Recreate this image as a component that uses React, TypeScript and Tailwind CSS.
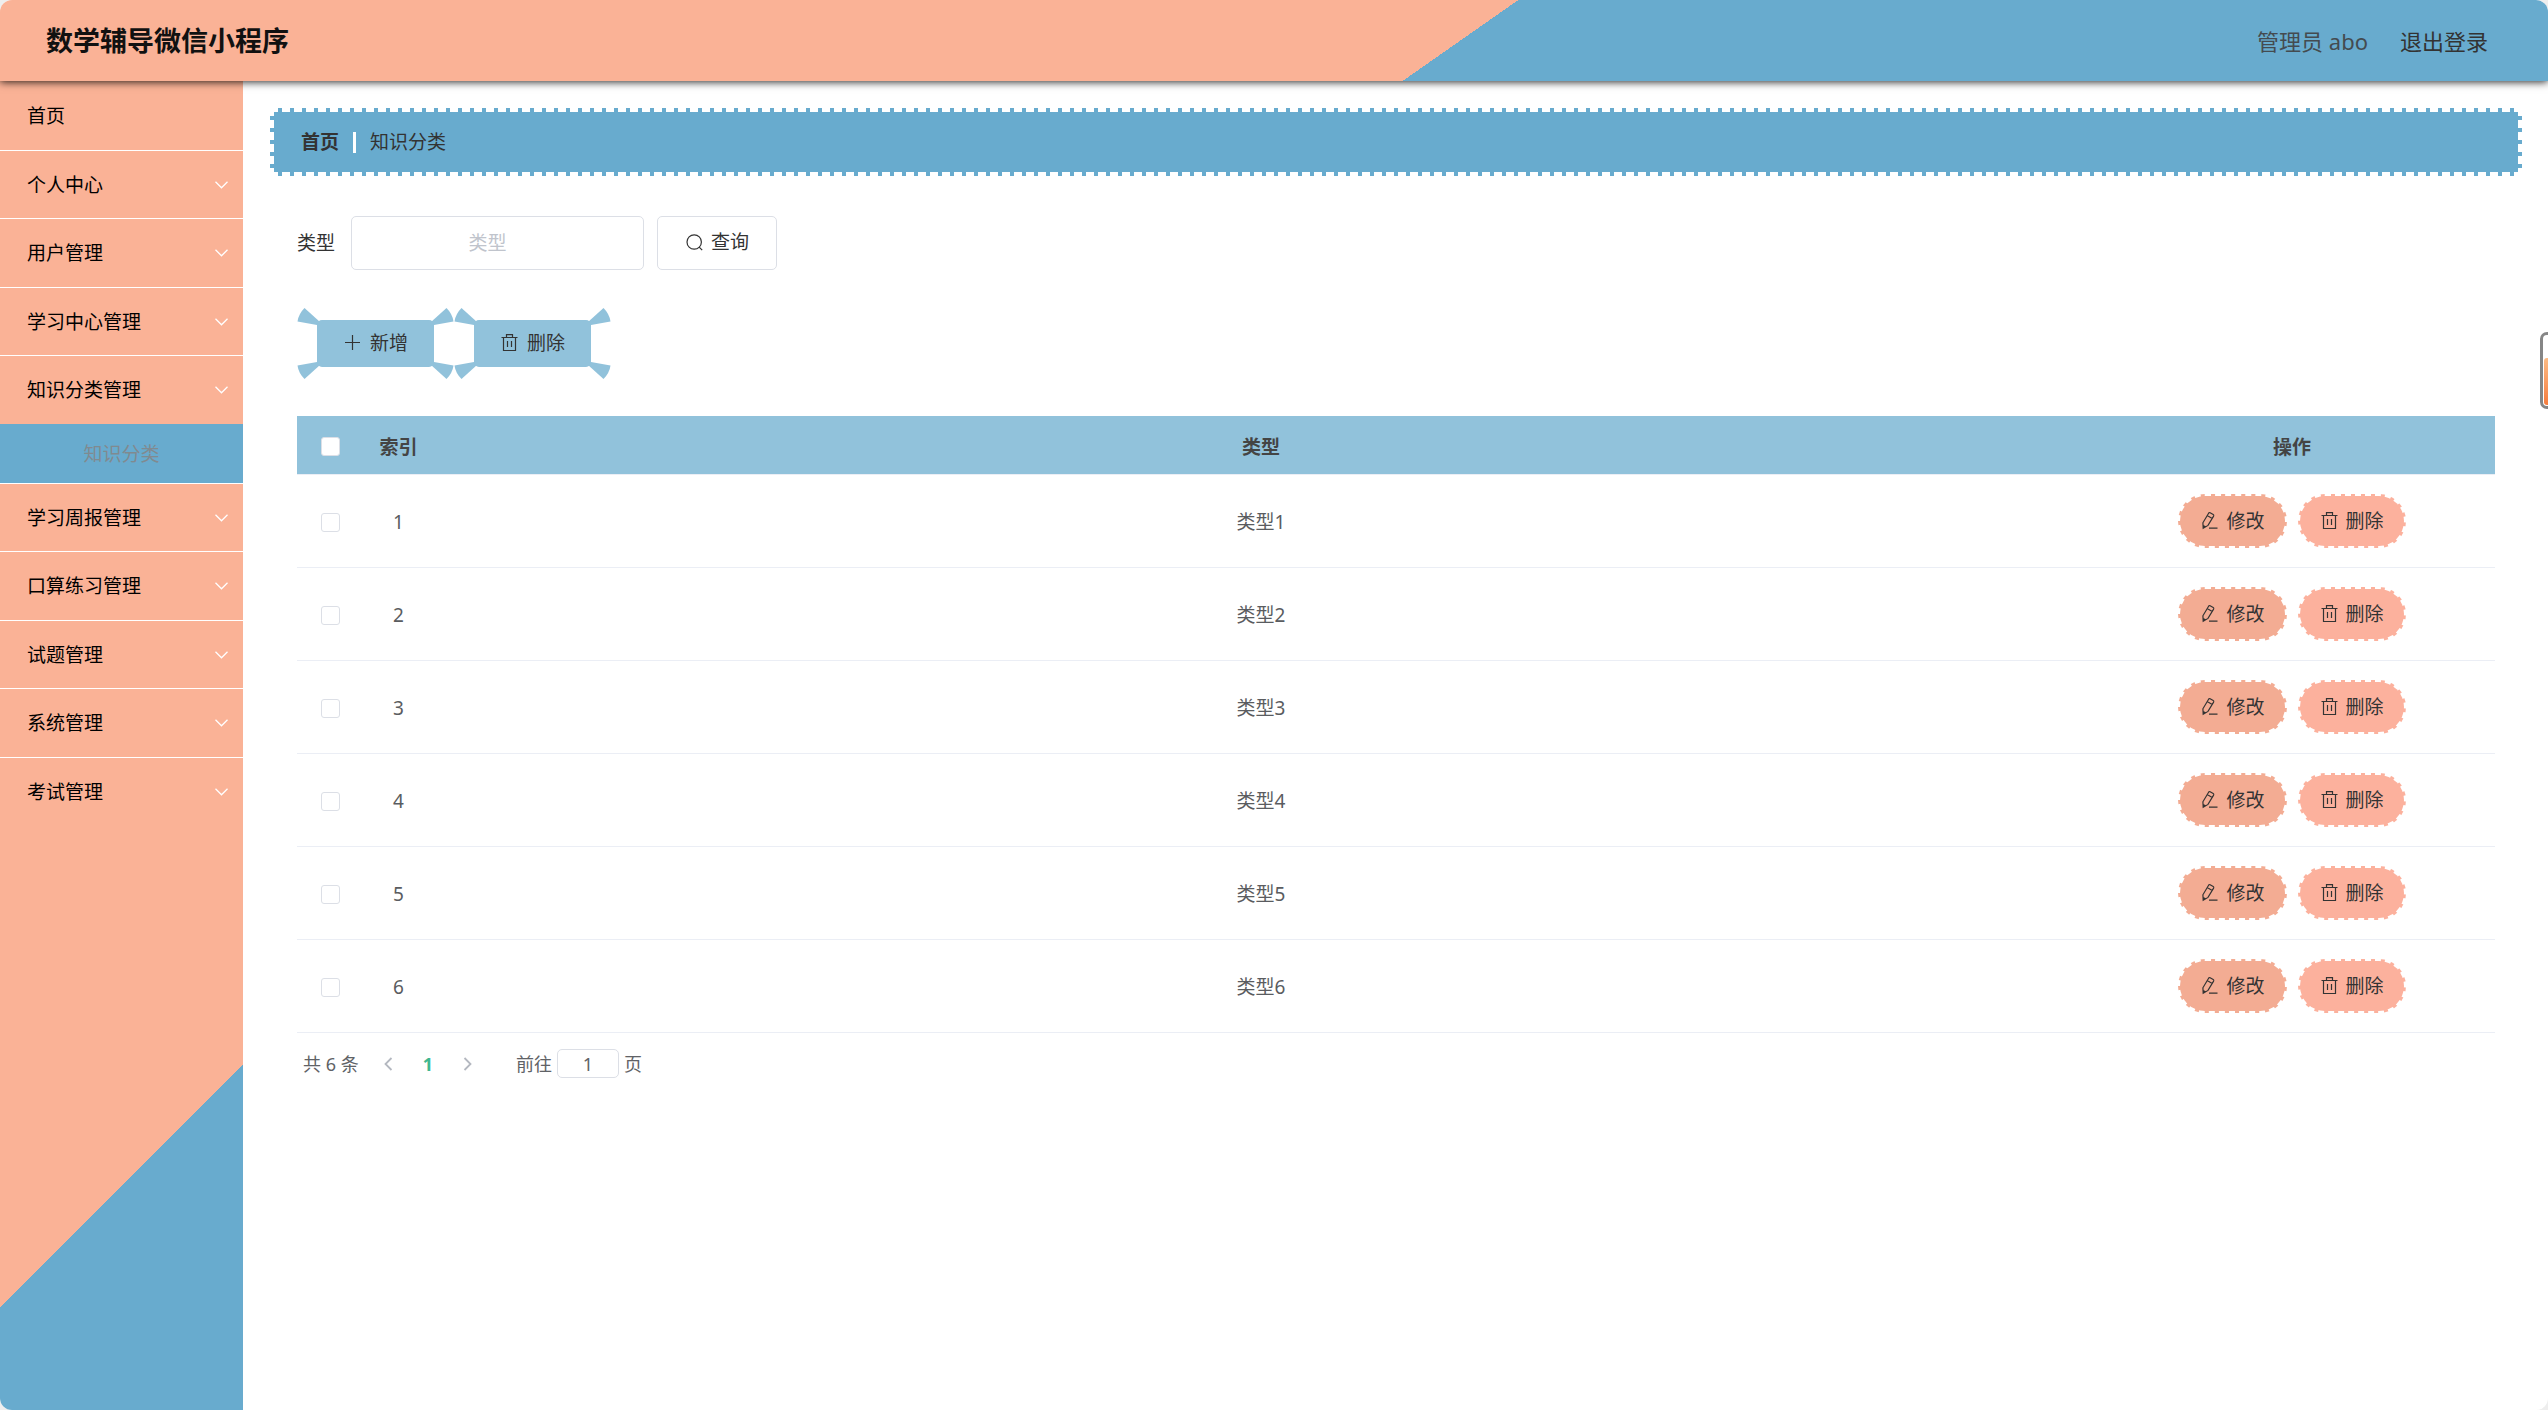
import { clsx } from 'clsx'
import type { ReactNode } from 'react'

interface MenuItem {
  label: string
  children?: string[]
  leaf?: boolean
}

const menu: MenuItem[] = [
  { label: '首页', leaf: true },
  { label: '个人中心' },
  { label: '用户管理' },
  { label: '学习中心管理' },
  { label: '知识分类管理', children: ['知识分类'] },
  { label: '学习周报管理' },
  { label: '口算练习管理' },
  { label: '试题管理' },
  { label: '系统管理' },
  { label: '考试管理' },
]

const rows = [
  { id: 1, type: '类型1' },
  { id: 2, type: '类型2' },
  { id: 3, type: '类型3' },
  { id: 4, type: '类型4' },
  { id: 5, type: '类型5' },
  { id: 6, type: '类型6' },
]

export default function App() {
  return (
    <div className="bg-[#eeeeee] font-['Noto_Sans','Noto_Sans_CJK_SC',sans-serif] text-[19px] leading-6 text-[#333]">
      <div className="relative flex min-h-screen flex-col overflow-hidden rounded-xl bg-white">
        <Header />
        <div className="flex flex-1">
          <Sidebar />
          <main className="min-w-0 flex-1 pt-[27px] pr-[26px] pl-[27px]">
            <Breadcrumb />
            <div className="px-[27px]">
              <SearchBar />
              <div className="mt-[38px] flex">
                <ToolButton icon={<PlusIcon />} label="新增" />
                <ToolButton icon={<TrashIcon />} label="删除" />
              </div>
              <TypeTable />
              <Pagination />
            </div>
          </main>
        </div>
        <SideWidget />
      </div>
    </div>
  )
}

function Header() {
  return (
    <header className="relative z-10 flex h-[81px] items-center justify-between bg-[linear-gradient(145deg,#fab296_57%,#68abce_57%)] pr-[60px] pl-[46px] shadow-[0_1px_8px_rgba(0,0,0,0.85)]">
      <h1 className="text-[27px] font-bold text-[#111]">数学辅导微信小程序</h1>
      <div className="flex items-center gap-8 text-[22px]">
        <span className="text-[#444b50]">管理员 abo</span>
        <button type="button" className="text-[#333]">退出登录</button>
      </div>
    </header>
  )
}

function Sidebar() {
  return (
    <aside className="w-[243px] shrink-0 bg-[linear-gradient(135deg,#fab296_78%,#68abce_78%)] pt-px">
      <ul>
        {menu.map((item) => (
          <li key={item.label} className="group border-b border-white last:border-b-0">
            <button
              type="button"
              className="flex h-[67px] w-full items-center justify-between pr-[15px] pl-[27px] text-black group-odd:h-[68px]"
            >
              <span>{item.label}</span>
              {!item.leaf && <ChevronDown />}
            </button>
            {item.children?.map((child) => (
              <a
                key={child}
                href="#type"
                className="flex h-[59px] items-center justify-center bg-[#68abce] text-[#808a90]"
              >
                {child}
              </a>
            ))}
          </li>
        ))}
      </ul>
    </aside>
  )
}

function Breadcrumb() {
  return (
    <nav className="flex h-[68px] items-center border-4 border-dashed border-white bg-[#68abce] px-[27px]">
      <a href="#home" className="font-bold">首页</a>
      <span className="mx-[14px] h-[21px] w-[3px] bg-white" />
      <span>知识分类</span>
    </nav>
  )
}

function SearchBar() {
  return (
    <form className="mt-10 flex items-center">
      <label htmlFor="type" className="mr-4">类型</label>
      <input
        id="type"
        placeholder="类型"
        className="mr-[13px] h-[54px] w-[293px] rounded-[5px] border border-[#dcdfe6] pr-[38px] pl-[18px] text-center placeholder:text-[#c0c4cc] focus:outline-none"
      />
      <button
        type="button"
        className="flex h-[54px] items-center gap-[7px] rounded-[5px] border border-[#dcdfe6] px-[27px] pb-[2px]"
      >
        <SearchIcon />
        <span>查询</span>
      </button>
    </form>
  )
}

interface ButtonProps {
  icon: ReactNode
  label: string
  className?: string
}

function ToolButton({ icon, label }: ButtonProps) {
  return (
    <div className="relative px-5 py-3">
      <Fan className="top-0 left-0" />
      <Fan className="top-0 right-0 -scale-x-100" />
      <Fan className="bottom-0 left-0 -scale-y-100" />
      <Fan className="right-0 bottom-0 -scale-100" />
      <button
        type="button"
        className="relative flex h-[47px] items-center gap-2 rounded-[5px] bg-[#91c2db] px-[26px] pb-[2px]"
      >
        {icon}
        <span>{label}</span>
      </button>
    </div>
  )
}

function ActionButton({ icon, label, className }: ButtonProps) {
  return (
    <button
      type="button"
      className={clsx(
        'flex h-[54px] items-center gap-[7px] rounded-full border-2 border-dashed border-white px-5 pb-px',
        className
      )}
    >
      {icon}
      <span>{label}</span>
    </button>
  )
}

const checkbox =
  'block size-[19px] mx-auto appearance-none rounded-[3px] border border-[#dcdfe6] bg-white checked:bg-[#68abce]'

function TypeTable() {
  return (
    <table className="mt-[37px] w-full table-fixed border-separate border-spacing-0 text-center">
      <colgroup>
        <col className="w-[67px]" />
        <col className="w-[69px]" />
        <col />
        <col className="w-[406px]" />
      </colgroup>
      <thead>
        <tr className="h-[59px] bg-[#91c2db] text-[#444] *:border-b *:border-[#ebeef5] *:bg-clip-padding *:pt-[3px]">
          <th>
            <input type="checkbox" aria-label="全选" className={checkbox} />
          </th>
          <th>索引</th>
          <th>类型</th>
          <th>操作</th>
        </tr>
      </thead>
      <tbody className="text-[#5a5c60]">
        {rows.map((row) => (
          <tr key={row.id} className="*:border-b *:border-[#ebeef5]">
            <td className="pt-[2px]">
              <input type="checkbox" aria-label={row.type} className={checkbox} />
            </td>
            <td className="pt-[2px]">{row.id}</td>
            <td className="pt-[2px]">{row.type}</td>
            <td className="py-[19px]">
              <div className="flex justify-center gap-[11px] text-[#333]">
                <ActionButton icon={<EditIcon />} label="修改" className="bg-[#f3ac93]" />
                <ActionButton icon={<TrashIcon />} label="删除" className="bg-[#fcb19d]" />
              </div>
            </td>
          </tr>
        ))}
      </tbody>
    </table>
  )
}

function Pagination() {
  return (
    <div className="mt-4 flex items-center pl-[6px] text-[18px] text-[#606266]">
      <span>共 6 条</span>
      <button type="button" aria-label="上一页" className="ml-6 text-[#b4b8c0]">
        <ChevronSide />
      </button>
      <button type="button" className="mx-[30px] font-bold text-[#3fb78f]">1</button>
      <button type="button" aria-label="下一页" className="-scale-x-100 text-[#b4b8c0]">
        <ChevronSide />
      </button>
      <label htmlFor="page" className="ml-[43px]">前往</label>
      <input
        id="page"
        defaultValue="1"
        className="mx-[5px] h-[29px] w-[62px] rounded-[5px] border border-[#dcdfe6] text-center focus:outline-none"
      />
      <span>页</span>
    </div>
  )
}

// Floating gauge that peeks out of the right edge
function SideWidget() {
  return (
    <div className="absolute top-[332px] -right-3 flex h-[77px] w-5 flex-col justify-end rounded-[7px] border-[3px] border-[#868686] bg-white p-px">
      <div className="h-[47px] rounded-[3px] bg-linear-to-b from-[#fcbb84] to-[#f67c3c]" />
    </div>
  )
}

function Fan({ className }: { className: string }) {
  return (
    <svg viewBox="0 0 24 20" className={clsx('absolute h-5 w-6 fill-[#91c2db]', className)}>
      <path d="M0.5 13.5 Q1.5 6 7.5 0 L23 14 V17.5 L20 17 Z" />
    </svg>
  )
}

function ChevronDown() {
  return (
    <svg viewBox="0 0 13 8" className="h-2 w-[13px] fill-none stroke-white">
      <path d="M0.5 0.8 L6.5 6.8 L12.5 0.8" strokeWidth="1.3" />
    </svg>
  )
}

function ChevronSide() {
  return (
    <svg viewBox="0 0 10 14" className="h-[14px] w-[10px] fill-none stroke-current">
      <path d="M8.5 1 L2.5 7 L8.5 13" strokeWidth="1.8" />
    </svg>
  )
}

const icon = 'size-[19px] fill-none stroke-current'

function PlusIcon() {
  return (
    <svg viewBox="0 0 19 19" className={icon}>
      <path d="M9.5 2 V17 M2 9.5 H17" strokeWidth="1.2" />
    </svg>
  )
}

function SearchIcon() {
  return (
    <svg viewBox="0 0 19 19" className={icon}>
      <circle cx="9.2" cy="9" r="7.2" strokeWidth="1.2" />
      <path d="M14.2 14.2 L17.2 17.2" strokeWidth="1.2" />
    </svg>
  )
}

function TrashIcon() {
  return (
    <svg viewBox="0 0 19 19" className={icon}>
      <path d="M1.5 4.5 H17.5 M3.5 4.5 V17.5 H15.5 V4.5 M6.5 4.5 V1.7 H12.5 V4.5 M7.5 8 V14 M11.5 8 V14" strokeWidth="1.2" />
    </svg>
  )
}

function EditIcon() {
  return (
    <svg viewBox="0 0 19 19" className={icon}>
      <path d="M8.6 2.2 Q9.2 1.3 10.1 1.8 L13.2 3.6 Q14.1 4.2 13.6 5.1 L8 14.4 L3.2 17.2 L2.9 11.8 Z M7.2 4.6 L12.2 7.5 M3 14.5 L5.6 15.9 M9 17.2 H17.5" strokeWidth="1.2" />
    </svg>
  )
}
